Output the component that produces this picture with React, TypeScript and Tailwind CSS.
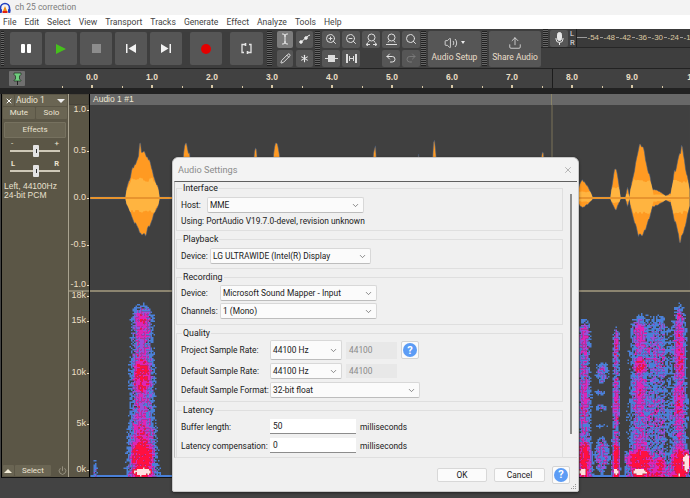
import { ChevronDown, Pencil, Asterisk, Undo2, Redo2, Upload, Volume2, ZoomIn, ZoomOut, Search, Power, X, TextCursor } from "lucide-react"
import type { ReactNode } from "react"

// small seeded random so the noise is the same on every render
function makeRandom(seed: number) {
  let s = seed
  return () => {
    s = (s * 1664525 + 1013904223) % 4294967296
    return s / 4294967296
  }
}

const CENTER_Y = 198
const DIALOG_LEFT = 172
const DIALOG_RIGHT = 579

// [center x, half width, height above center, height below center]
const spikes = [
  [143, 17, 57, 41], [187, 8, 60, 40], [204, 3, 44, 30], [214, 3, 47, 30], [256, 5, 55, 40], [277, 8, 58, 40],
  [353, 4, 49, 30], [375, 4, 58, 30], [419, 3, 45, 30], [435, 5, 58, 30], [453, 3, 46, 30], [543, 4, 51, 30],
  [584, 9, 18, 9], [616, 5, 30, 12], [642, 12, 56, 45], [628, 2, 10, 8], [656, 11, 8, 8], [671, 6, 4, 4], [681, 10, 52, 44],
]

function wavePoints(scale: number, cap: number, seed: number) {
  const rand = makeRandom(seed)
  const up: string[] = []
  const down: string[] = []
  let ju = 1
  let jd = 1
  for (let x = 91; x <= 690; x++) {
    let a = 0
    let b = 0
    for (const [cx, w, u, d] of spikes) {
      const t = Math.max(0, 1 - Math.abs(x - cx) / w)
      if (t === 0) continue
      const shape = Math.min(1, 0.08 + 1.1 * t)
      a = Math.max(a, Math.min(u * cap, u * shape))
      b = Math.max(b, Math.min(d * cap, d * shape))
    }
    if (x % 2 === 0) {
      ju = 0.76 + rand() * 0.24
      jd = 0.76 + rand() * 0.24
    }
    up.push(`${x},${CENTER_Y - 1 - a * scale * ju}`)
    down.unshift(`${x},${CENTER_Y + 1 + b * scale * jd}`)
  }
  return [...up, ...down].join(" ")
}

// [center x, half width, top of the column as fraction of height, strength, low end boost]
const bursts = [
  [142, 16, 0.97, 0.92, 0.5], [584, 9, 0.9, 0.8, 0.45], [616, 5, 0.85, 0.85, 0.5],
  [640, 13, 0.92, 0.82, 0.5], [655, 38, 0.93, 0.58, 0.4], [679, 10, 0.98, 0.88, 0.5],
  [95, 3, 0.15, 0.42, 0.1],
]

// hot spots and the blobs in the quiet gap [x, y, rx, ry, strength]
const blobs = [
  [602, 372, 8, 12, 0.5], [600, 392, 7, 3, 0.38], [601, 407, 6, 4, 0.5], [601, 425, 8, 3, 0.32], [602, 455, 8, 20, 0.6],
  [142, 375, 10, 24, 1.02], [142, 455, 13, 22, 1.12], [142, 471, 11, 5, 1.95],
  [584, 455, 8, 18, 1.06], [583, 471, 5, 4, 1.85], [616, 455, 4, 18, 1.08], [616, 471, 3, 4, 1.85],
  [640, 460, 16, 14, 1.08], [640, 471, 9, 4, 1.95], [680, 460, 11, 16, 1.06], [686, 462, 4, 12, 1.85], [660, 464, 6, 10, 0.98],
  [640, 365, 8, 10, 0.95], [680, 360, 6, 25, 0.86],
]

function spectrogramPaths() {
  const rand = makeRandom(77)
  const buckets: Record<string, string[]> = { blue: [], purple: [], magenta: [], red: [], white: [] }
  const size = 1.5
  for (let y = 292; y < 477; y += size) {
    const f = (477 - y) / 185
    for (let x = 91; x < 690; x += size) {
      if (x > DIALOG_LEFT && x < DIALOG_RIGHT) continue // hidden by the dialog
      let v = 0
      for (const [cx, w, top, strength, boost] of bursts) {
        const fade = Math.min(1, Math.max(0, (top - f) / 0.1))
        const narrow = 1 - f * 0.3
        const d = (x - cx) / (w * narrow)
        const g = Math.exp(-d * d * 1.2)
        const low = f < 0.18 ? boost * (0.18 - f) * 5 : 0
        v = Math.max(v, g * (strength * fade * (0.85 + 0.12 * Math.sin(f * 19 + cx)) + low))
      }
      for (const [bx, by, rx, ry, s] of blobs) {
        const d = ((x - bx) / rx) ** 2 + ((y - by) / ry) ** 2
        v = Math.max(v, s * Math.exp(-d * d))
      }
      if (x > 620 && x < 625) v *= 0.5
      if (x > 664 && x < 669) v *= 0.75
      // the quiet parts are much more speckled than the hot ones
      v *= v < 0.65 ? 0.5 + rand() * 1.0 : 0.8 + rand() * 0.4
      if (y > 474) v = Math.max(v, 0.4)
      let bucket = ""
      if (v > 1.42) bucket = "white"
      else if (v > 0.92) bucket = "red"
      else if (v > 0.7) bucket = "magenta"
      else if (v > 0.54) bucket = "purple"
      else if (v > 0.3) bucket = "blue"
      if (bucket) buckets[bucket].push(`M${x} ${y}h${size}v${size}h-${size}z`)
    }
  }
  return buckets
}

const spectrogram = spectrogramPaths()

function Gripper() {
  return <div className="h-full w-[5px] bg-[repeating-linear-gradient(#202020_0,#202020_1px,#666_1px,#666_2px)]" />
}

function ToolButton({ children, active, className }: { children: ReactNode; active?: boolean; className?: string }) {
  return (
    <div className={`flex items-center justify-center rounded-[2px] ${active ? "bg-[#7c7c7c]" : "bg-[#565656]"} ${className ?? "h-[17px] w-[18px]"}`}>
      {children}
    </div>
  )
}

function TransportButton({ children, className }: { children: ReactNode; className?: string }) {
  return <div className={`flex h-[33px] w-[32px] items-center justify-center rounded-[2px] bg-[#565656] ${className ?? ""}`}>{children}</div>
}

function ZoomFit({ flip }: { flip?: boolean }) {
  return (
    <svg width="13" height="13" viewBox="0 0 13 13" fill="none" stroke="#ddd" strokeWidth="1">
      <circle cx="6.5" cy="4.5" r="3.5" />
      <path d="M4 8l-1 1.5M9 8l1 1.5" />
      {flip ? <path d="M1 11.5h11" /> : <path d="M1 11.5h4M8 11.5h4M3 10l-2 1.5 2 1.5M10 10l2 1.5-2 1.5" />}
    </svg>
  )
}

function Toolbar() {
  return (
    <div className="flex h-[40px] items-center border-b border-[#222] bg-[#3e3e3e]">
      <div className="ml-[1px] mr-[6px] self-stretch py-[2px]">
        <div className="h-full w-[3px] bg-[repeating-linear-gradient(#202020_0,#202020_1px,#666_1px,#666_2px)]" />
      </div>
      <div className="flex gap-[3px]">
        <TransportButton>
          <div className="flex gap-[2px]">
            <div className="h-[9px] w-[4px] rounded-[1px] bg-white" />
            <div className="h-[9px] w-[4px] rounded-[1px] bg-white" />
          </div>
        </TransportButton>
        <TransportButton>
          <svg width="12" height="12" viewBox="0 0 12 12"><path d="M1 1l10 5-10 5z" fill="#46c01c" /></svg>
        </TransportButton>
        <TransportButton><div className="h-[9px] w-[9px] bg-[#8c8c8c]" /></TransportButton>
        <TransportButton>
          <svg width="12" height="11" viewBox="0 0 12 11"><path d="M1 1h1.5v9H1zM11 1v9L3.5 5.5z" fill="#f2f2f2" /></svg>
        </TransportButton>
        <TransportButton>
          <svg width="12" height="11" viewBox="0 0 12 11"><path d="M9.5 1H11v9H9.5zM1 1v9l7.5-4.5z" fill="#f2f2f2" /></svg>
        </TransportButton>
      </div>
      <TransportButton className="ml-[8px]"><div className="h-[10px] w-[10px] rounded-full bg-[#e30000]" /></TransportButton>
      <TransportButton className="ml-[8px] w-[33px]">
        <svg width="13" height="13" viewBox="0 0 13 13" fill="none" stroke="#e4e4e4" strokeWidth="1.3">
          <path d="M6 2.5H2v8h2M7 10.5h4v-8H9" />
          <path d="M5.5 1v3M7.5 9v3" strokeWidth="1.6" />
        </svg>
      </TransportButton>
      <div className="ml-[4px] mr-[3px] self-stretch py-[2px]"><Gripper /></div>
      <div className="ml-[2px] grid grid-cols-2 gap-x-[2px] gap-y-[2px]">
        <ToolButton active className="h-[17px] w-[16px]"><TextCursor size={12} color="#f0f0f0" /></ToolButton>
        <ToolButton className="h-[17px] w-[17px]">
          <svg width="13" height="12" viewBox="0 0 13 12" fill="none" stroke="#eee"><path d="M2 10L10 3" /><circle cx="3" cy="9" r="1.3" fill="#eee" /><circle cx="8" cy="5" r="1.3" fill="#eee" /><path d="M10 3l2-1" /></svg>
        </ToolButton>
        <ToolButton className="h-[17px] w-[16px]"><Pencil size={11} color="#e8e8e8" /></ToolButton>
        <ToolButton className="h-[17px] w-[17px]"><Asterisk size={13} color="#e8e8e8" /></ToolButton>
      </div>
      <div className="ml-[2px] self-stretch py-[2px]"><Gripper /></div>
      <div className="ml-[2px] grid grid-cols-5 gap-x-[2px] gap-y-[2px]">
        <ToolButton><ZoomIn size={12} color="#ddd" /></ToolButton>
        <ToolButton><ZoomOut size={12} color="#ddd" /></ToolButton>
        <ToolButton><ZoomFit /></ToolButton>
        <ToolButton><ZoomFit flip /></ToolButton>
        <ToolButton><Search size={12} color="#ddd" /></ToolButton>
        <ToolButton>
          <svg width="13" height="9" viewBox="0 0 13 9" fill="#ddd"><path d="M3 1h7v7H3zM0 4h3v1H0zM10 4h3v1h-3z" /></svg>
        </ToolButton>
        <ToolButton>
          <svg width="13" height="9" viewBox="0 0 13 9" fill="#ddd"><path d="M1 0h2v9H1zM10 0h2v9h-2zM4 4h5v1H4zM4 2h1v5H4zM8 2h1v5H8z" /></svg>
        </ToolButton>
        <div />
        <ToolButton><Undo2 size={12} color="#e4e4e4" /></ToolButton>
        <ToolButton><Redo2 size={12} color="#7a7a7a" /></ToolButton>
      </div>
      <div className="ml-[1px] self-stretch py-[2px]"><Gripper /></div>
      <div className="ml-[2px] flex h-[36px] w-[53px] flex-col items-center justify-center gap-[1px] rounded-[2px] bg-[#565656] text-[#eadfca]">
        <div className="flex h-[17px] items-center gap-[3px]">
          <Volume2 size={14} color="#ececec" strokeWidth={1.4} />
          <span className="h-0 w-0 border-x-[2px] border-t-[3px] border-x-transparent border-t-[#ececec]" />
        </div>
        <span className="text-[8.5px] leading-[11px]">Audio Setup</span>
      </div>
      <div className="ml-[1px] self-stretch py-[2px]"><Gripper /></div>
      <div className="ml-[2px] flex h-[36px] w-[52px] flex-col items-center justify-center gap-[1px] rounded-[2px] bg-[#565656] text-[#eadfca]">
        <div className="flex h-[17px] items-center"><Upload size={14} color="#ececec" strokeWidth={1.3} /></div>
        <span className="text-[8.5px] leading-[11px]">Share Audio</span>
      </div>
      <div className="flex min-w-0 flex-1 flex-col self-stretch">
        <div className="flex h-[19px] items-end border-b border-[#262626]">
          <div className="ml-[2px] h-[18px]"><Gripper /></div>
          <ToolButton className="ml-[2px] h-[17px] w-[18px]">
            <svg width="9" height="13" viewBox="0 0 9 13" fill="none" stroke="#e8e8e8">
              <rect x="2.5" y="0.5" width="4" height="8" rx="2" fill="#e8e8e8" />
              <path d="M1 6v1a3.5 3.5 0 0 0 7 0V6M4.5 10.5V13" />
            </svg>
          </ToolButton>
          <div className="ml-[2px] flex h-[17px] w-[6px] flex-col text-[7.5px] leading-[8.5px] text-[#e6e6e6]">
            <span>L</span>
            <span>R</span>
          </div>
          <div className="relative h-[18px] flex-1 overflow-hidden border-l border-[#222] bg-[#3a3a3a] font-['Liberation_Sans',sans-serif] text-[8px] text-[#dcc9a2]">
            <div className="absolute left-0 right-0 top-[8px] h-[1px] bg-[#9a9a9a]" />
            <div className="absolute left-[10px] top-[4px] flex gap-[3.5px] leading-[10px]">
              {["-54", "-48", "-42", "-36", "-30", "-24", "-18"].map((n) => (
                <span key={n} className="w-[12.5px] bg-[#3a3a3a] text-center">{n}</span>
              ))}
            </div>
          </div>
        </div>
      </div>
    </div>
  )
}

function TimeRuler() {
  const labels = ["0.0", "1.0", "2.0", "3.0", "4.0", "5.0", "6.0", "7.0", "8.0", "9.0", "10"]
  return (
    <div className="relative h-[19px] overflow-hidden bg-[#414141] font-['Liberation_Sans',sans-serif] text-[8.5px] font-bold text-[#ecdfc4]">
      <div className="absolute left-[9px] top-[2px] flex h-[15px] w-[16px] items-center justify-center rounded-[1px] bg-[#707070]">
        <svg width="9" height="13" viewBox="0 0 9 13">
          <path d="M1 1h7v1.5L6.5 4v3L8 8.5V9H1v-.5L2.5 7V4L1 2.5z" fill="#6fce7e" stroke="#1c2c1c" strokeWidth="0.7" />
          <path d="M4.5 9v4" stroke="#222" />
        </svg>
      </div>
      {labels.map((label, i) => (
        <span key={label} style={{ left: 92 + i * 60 - 9 }} className="absolute top-[3px] w-[18px] text-center leading-[11px]">{label}</span>
      ))}
      {labels.map((label, i) => (
        <div key={label} style={{ left: 92 + i * 60 - 1 }} className="absolute bottom-0 h-[3px] w-[1.5px] bg-[#d9c9a6]" />
      ))}
      {labels.map((label, i) => (
        <div key={label} style={{ left: 62 + i * 60 }} className="absolute bottom-0 h-[2px] w-[1px] bg-[#d9c9a6]" />
      ))}
      <div className="absolute left-[552px] top-0 h-full w-[1px] bg-[#1c1c1c]" />
    </div>
  )
}

function PanelButton({ children, className }: { children: ReactNode; className?: string }) {
  return <div className={`flex items-center rounded-[1px] bg-[#6a6553] text-[8px] leading-none text-[#ece4d2] ${className ?? ""}`}>{children}</div>
}

function Slider() {
  return (
    <div className="relative mx-[8px] h-[12px]">
      <div className="absolute inset-x-0 top-[5px] h-[2px] bg-[#cfc9b8]" />
      <div className="absolute left-[23px] top-0 flex h-[12px] w-[6px] items-center justify-center rounded-[1px] bg-[#e4e4e4]">
        <div className="h-[4px] w-[1px] bg-[#333]" />
      </div>
    </div>
  )
}

function TrackPanel() {
  return (
    <div className="flex w-[66px] flex-col bg-[#5b5646] pt-[1px] text-[#ece4d2]">
      <div className="flex h-[11px] gap-[1px] px-[1px]">
        <PanelButton className="w-[11px] justify-center"><X size={8} color="#fff" strokeWidth={3} /></PanelButton>
        <PanelButton className="flex-1 justify-between px-[1px]">
          <span className="text-[8.5px]">Audio 1</span>
          <span className="mr-[1px] h-0 w-0 border-x-[4px] border-t-[4px] border-x-transparent border-t-[#eee]" />
        </PanelButton>
      </div>
      <div className="mt-[1px] flex h-[12px] gap-[1px] px-[1px]">
        <PanelButton className="w-[32px] justify-center">Mute</PanelButton>
        <PanelButton className="flex-1 justify-center">Solo</PanelButton>
      </div>
      <PanelButton className="mx-[2px] mt-[3px] h-[16px] justify-center border border-[#76715f] text-[8.5px]">Effects</PanelButton>
      <div className="mx-[9px] mt-[1px] flex h-[6px] justify-between text-[8px] leading-[10px]"><span>-</span><span>+</span></div>
      <Slider />
      <div className="mx-[9px] flex h-[8px] justify-between text-[7.5px] font-bold leading-[14px]"><span>L</span><span>R</span></div>
      <Slider />
      <div className="mt-[5px] px-[2px] font-['Liberation_Sans',sans-serif] text-[8.5px] leading-[9px] text-[#e8e0ce]">
        <div>Left, 44100Hz</div>
        <div>24-bit PCM</div>
      </div>
      <div className="mt-auto flex h-[12px] items-center gap-[1px] px-[1px] pb-[1px]">
        <PanelButton className="h-[11px] w-[12px] justify-center">
          <span className="h-0 w-0 border-x-[4px] border-b-[4px] border-x-transparent border-b-[#f2ecd8]" />
        </PanelButton>
        <PanelButton className="h-[11px] w-[40px] justify-center">Select</PanelButton>
        <div className="ml-[6px]"><Power size={9} color="#a8a392" /></div>
      </div>
    </div>
  )
}

function ScaleLabel({ top, text }: { top: number; text: string }) {
  return (
    <div style={{ top: top - 6 }} className="absolute right-0 flex h-[12px] items-center gap-[1px] font-['Liberation_Sans',sans-serif] text-[9px] text-[#ecdfc4]">
      <span>{text}</span>
      <span className="h-[1px] w-[2px] bg-[#ecdfc4]" />
    </div>
  )
}

function VerticalRuler() {
  const marks: [number, string][] = [
    [16, "1.0"], [57, "0.5"], [104, "0.0"], [151, "-0.5"], [191, "-1.0"],
    [202, "18k"], [227, "15k"], [279, "10k"], [330, "5k"], [376, "0k"],
  ]
  return (
    <div className="relative w-[21px] overflow-hidden border-l border-[#a9a390] bg-[#5b5646]">
      <div className="h-[11px] border border-[#47433a] bg-[#4f4b3e]" />
      <div className="absolute inset-x-0 top-[196px] h-[2px] bg-[#8c8570]" />
      {marks.map(([top, text]) => <ScaleLabel key={text} top={top} text={text} />)}
    </div>
  )
}

function Waveform() {
  return (
    <svg viewBox="91 105 599 185" className="block h-[185px] w-full">
      <rect x="91" y="105" width="599" height="185" fill="#404040" />
      <line x1="552.5" x2="552.5" y1="105" y2="290" stroke="#7a7358" />
      <polygon points={wavePoints(1, 1, 5)} fill="#ff9a22" stroke="#3f5a80" strokeWidth="0.6" />
      <polygon points={wavePoints(0.85, 0.4, 9)} fill="#ffb440" />
      <line x1="91" x2="690" y1={CENTER_Y} y2={CENTER_Y} stroke="#e08a28" strokeWidth="1.5" />
    </svg>
  )
}

function Spectrogram() {
  return (
    <svg viewBox="91 292 599 185" className="block h-[185px] w-full">
      <rect x="91" y="292" width="599" height="185" fill="#404040" />
      <g className="blur-[0.5px]">
        <path d={spectrogram.blue.join("")} fill="#4a80d8" />
        <path d={spectrogram.purple.join("")} fill="#9a50d8" />
        <path d={spectrogram.magenta.join("")} fill="#e024b4" />
        <path d={spectrogram.red.join("")} fill="#ff1040" />
        <path d={spectrogram.white.join("")} fill="#ffe0e0" />
      </g>
    </svg>
  )
}

function Group({ title, children, className }: { title: string; children: ReactNode; className?: string }) {
  return (
    <div className={`relative mb-[8px] border border-[#dfdfdf] pl-[4px] ${className ?? ""}`}>
      <span className="absolute -top-[6px] left-[5px] bg-[#f0f0f0] px-[1px] text-[8.8px] leading-[11px]">{title}</span>
      {children}
    </div>
  )
}

function Select({ text, className }: { text: string; className: string }) {
  return (
    <div className={`flex items-center justify-between rounded-[2px] border border-[#d8d8d8] border-b-[#bdbdbd] bg-[#fbfbfb] pl-[2px] pr-[3px] ${className}`}>
      <span>{text}</span>
      <ChevronDown size={9} color="#666" />
    </div>
  )
}

function HelpButton({ className }: { className?: string }) {
  return (
    <div className={`flex h-[18px] w-[18px] items-center justify-center rounded-[2px] border border-[#d4d4d4] bg-[#fbfbfb] ${className ?? ""}`}>
      <div className="flex h-[14px] w-[14px] items-center justify-center rounded-full bg-[#5c9cf5] text-[11px] font-bold leading-none text-white">?</div>
    </div>
  )
}

function Readout({ text, className }: { text: string; className: string }) {
  return <div className={`ml-[4px] flex w-[51px] items-center bg-[#e8e8e8] pl-[3px] text-[#8a8a8a] ${className}`}>{text}</div>
}

function FormLabel({ text, className }: { text: string; className: string }) {
  return <span className={`shrink-0 whitespace-nowrap ${className}`}>{text}</span>
}

function LatencyRow({ label, value, className }: { label: string; value: string; className: string }) {
  return (
    <div className={`flex items-center ${className}`}>
      <FormLabel text={label} className="w-[89px]" />
      <div className="flex h-[15px] w-[86px] items-center border-b border-[#8c8c8c] bg-white pl-[3px]">{value}</div>
      <span className="ml-[4px]">milliseconds</span>
    </div>
  )
}

function AudioSettings() {
  return (
    <div className="absolute left-[172px] top-[157px] flex h-[335px] w-[407px] flex-col rounded-t-[6px] rounded-b-[2px] border border-[#c8c8c8] bg-[#f0f0f0] font-['Roboto',sans-serif] text-[8.4px] leading-[12px] text-[#1a1a1a] shadow-[0_1px_3px_rgba(0,0,0,0.5)]">
      <div className="flex h-[23px] items-center justify-between rounded-t-[6px] bg-[#f3f3f3] pl-[5px] pr-[5px] text-[9.2px] text-[#8c8c8c]">
        <span>Audio Settings</span>
        <X size={10} color="#777" strokeWidth={1.2} />
      </div>
      <div className="ml-[1px] mr-[1px] flex h-[277px] border-b border-l border-t border-b-[#dcdcdc] border-l-[#bcbcbc] border-t-[#5f5f5f]">
        <div className="w-[388px] pl-[1px] pt-[6px]">
          <Group title="Interface" className="h-[43px] pt-[8px]">
            <div className="flex items-center">
              <FormLabel text="Host:" className="w-[26px]" />
              <Select text="MME" className="h-[16px] w-[157px]" />
            </div>
            <div className="mt-[2px]">Using: PortAudio V19.7.0-devel, revision unknown</div>
          </Group>
          <Group title="Playback" className="h-[30px] pt-[8px]">
            <div className="flex items-center">
              <FormLabel text="Device:" className="w-[29px]" />
              <Select text="LG ULTRAWIDE (Intel(R) Display" className="h-[16px] w-[161px]" />
            </div>
          </Group>
          <Group title="Recording" className="h-[48px] pt-[7px]">
            <div className="flex items-center">
              <FormLabel text="Device:" className="w-[39px]" />
              <Select text="Microsoft Sound Mapper - Input" className="h-[16px] w-[157px]" />
            </div>
            <div className="mt-[2px] flex items-center">
              <FormLabel text="Channels:" className="w-[39px]" />
              <Select text="1 (Mono)" className="h-[16px] w-[157px]" />
            </div>
          </Group>
          <Group title="Quality" className="h-[69px] pt-[6px]">
            <div className="flex items-center">
              <FormLabel text="Project Sample Rate:" className="w-[89px]" />
              <Select text="44100 Hz" className="h-[20px] w-[72px]" />
              <Readout text="44100" className="h-[17px]" />
              <HelpButton className="ml-[4px]" />
            </div>
            <div className="mt-[3px] flex items-center">
              <FormLabel text="Default Sample Rate:" className="w-[89px]" />
              <Select text="44100 Hz" className="h-[16px] w-[72px]" />
              <Readout text="44100" className="h-[14px]" />
            </div>
            <div className="mt-[3px] flex items-center">
              <FormLabel text="Default Sample Format:" className="w-[89px]" />
              <Select text="32-bit float" className="h-[16px] w-[150px]" />
            </div>
          </Group>
          <Group title="Latency" className="h-[48px] pt-[8px]">
            <LatencyRow label="Buffer length:" value="50" className="" />
            <LatencyRow label="Latency compensation:" value="0" className="mt-[4px]" />
          </Group>
        </div>
        <div className="ml-[7px] mt-[12px] h-[240px] w-[2px] bg-[#8c8c8c]" />
      </div>
      <div className="relative flex flex-1 items-center justify-end gap-[7px] pr-[8px]">
        <div className="flex h-[14px] w-[50px] items-center justify-center rounded-[2px] border border-[#d8d8d8] bg-[#fbfbfb]">OK</div>
        <div className="flex h-[14px] w-[51px] items-center justify-center rounded-[2px] border border-[#d8d8d8] bg-[#fbfbfb]">Cancel</div>
        <HelpButton />
        <svg width="6" height="6" viewBox="0 0 6 6" className="absolute bottom-[1px] right-[1px]" fill="#9a9a9a">
          <rect x="4" y="0" width="1" height="1" /><rect x="2" y="2" width="1" height="1" /><rect x="4" y="2" width="1" height="1" />
          <rect x="0" y="4" width="1" height="1" /><rect x="2" y="4" width="1" height="1" /><rect x="4" y="4" width="1" height="1" />
        </svg>
      </div>
    </div>
  )
}

export default function App() {
  const menu = ["File", "Edit", "Select", "View", "Transport", "Tracks", "Generate", "Effect", "Analyze", "Tools", "Help"]
  return (
    <div className="relative flex h-[498px] w-[690px] flex-col overflow-hidden bg-[#434343] font-['Roboto',sans-serif]">
      <div className="flex h-[15px] items-center bg-[#f3f3f3]">
        <svg width="12" height="12" viewBox="0 0 12 12" className="-ml-[1px]">
          <path d="M1.5 9V6a4.5 4.5 0 0 1 9 0v3" fill="none" stroke="#2040c0" strokeWidth="1.6" />
          <rect x="0.5" y="7" width="2.5" height="4" rx="1" fill="#2040c0" />
          <rect x="9" y="7" width="2.5" height="4" rx="1" fill="#2040c0" />
          <path d="M4 9l2-5 2 5z" fill="#f08a10" />
          <rect x="3.5" y="9" width="5" height="2" fill="#e02010" />
        </svg>
        <span className="ml-[4px] text-[8.5px] text-[#7d7d7d]">ch 25 correction</span>
      </div>
      <div className="flex h-[14px] items-center gap-[8px] bg-white pl-[3px] text-[8.6px] text-[#444]">
        {menu.map((item) => <span key={item}>{item}</span>)}
      </div>
      <Toolbar />
      <TimeRuler />
      <div className="h-[6px] bg-[#222]" />
      <div className="ml-[1px] flex h-[384px] border-b border-l border-b-[#111] border-l-black">
        <TrackPanel />
        <VerticalRuler />
        <div className="relative min-w-0 flex-1 border-l border-black">
          <div className="relative flex h-[11px] items-center bg-[#686868] pl-[3px] font-['Liberation_Sans',sans-serif] text-[8.5px] text-[#eee6d2]">
            Audio 1 #1
            <div className="absolute left-[461px] top-0 h-full w-[1px] bg-[#8a8468]" />
          </div>
          <Waveform />
          <div className="h-[2px] bg-[#8c8570]" />
          <Spectrogram />
        </div>
      </div>
      <AudioSettings />
    </div>
  )
}
